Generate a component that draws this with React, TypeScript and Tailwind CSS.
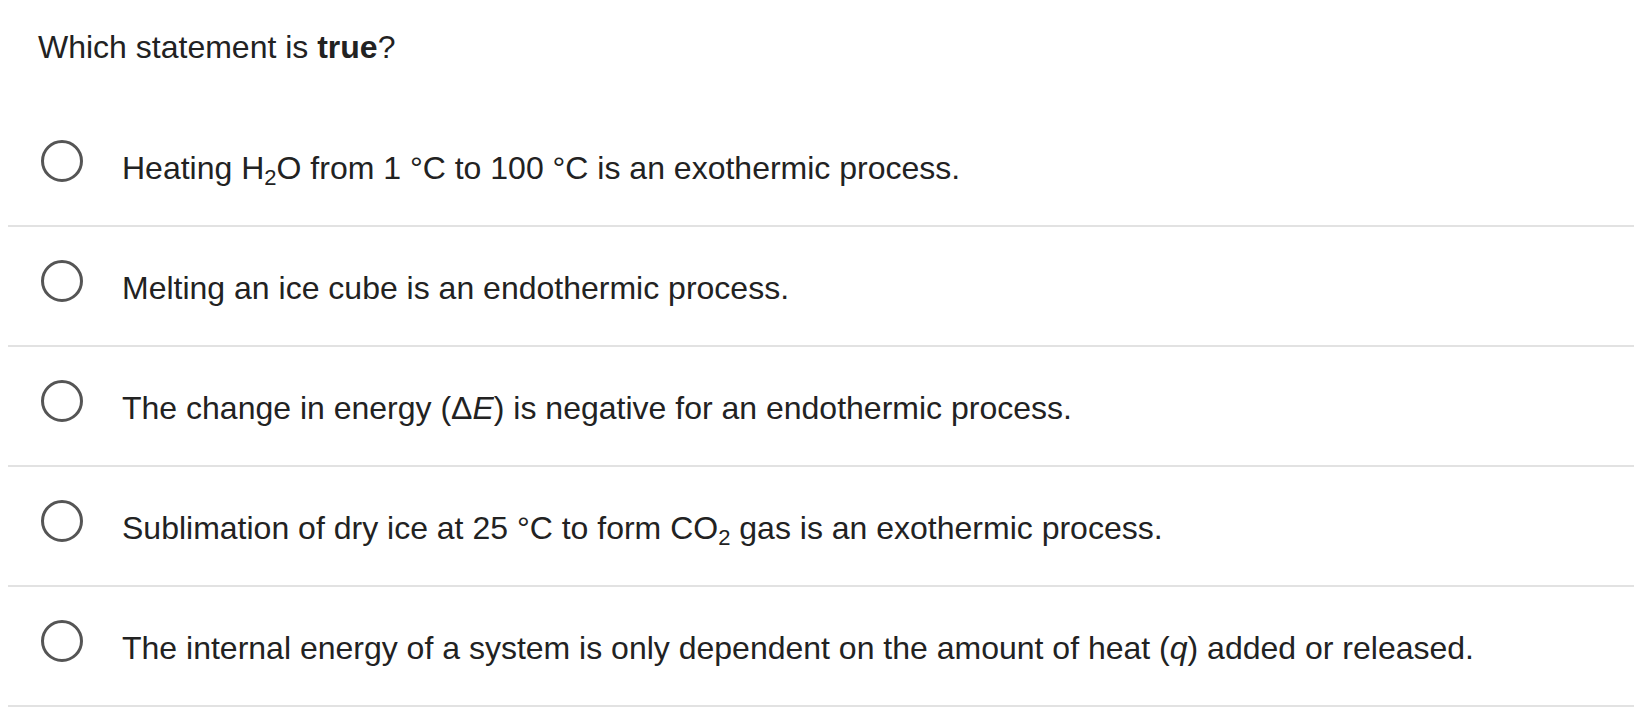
import { ReactNode } from 'react';

const options: ReactNode[] = [
	<>
		Heating H<sub className="text-[22px] relative top-[6px] align-baseline">2</sub>O from 1 °C to 100 °C is an exothermic process.
	</>,
	<>Melting an ice cube is an endothermic process.</>,
	<>
		The change in energy (Δ<i>E</i>) is negative for an endothermic process.
	</>,
	<>
		Sublimation of dry ice at 25 °C to form CO<sub className="text-[22px] relative top-[6px] align-baseline">2</sub> gas is an exothermic process.
	</>,
	<>
		The internal energy of a system is only dependent on the amount of heat (<i>q</i>) added or released.
	</>,
];

export default function App() {
	return (
		<div className="min-h-screen bg-white text-[#222] font-['Liberation_Sans',Arial,sans-serif]">
			<p className="pl-[38px] pt-[29px] mb-[42px] text-[32px] leading-[36px]">
				Which statement is <b>true</b>?
			</p>
			<ul className="ml-2">
				{options.map((opt, i) => (
					<li key={i} className="flex items-start h-[120px] border-b-2 border-[#e2e2e2]">
						<span className="mt-[33px] ml-[33px] w-[42px] h-[42px] shrink-0 rounded-full border-[3px] border-[#555]" />
						<span className="pt-[43px] ml-[39px] text-[32px] leading-[36px]">{opt}</span>
					</li>
				))}
			</ul>
		</div>
	);
}
